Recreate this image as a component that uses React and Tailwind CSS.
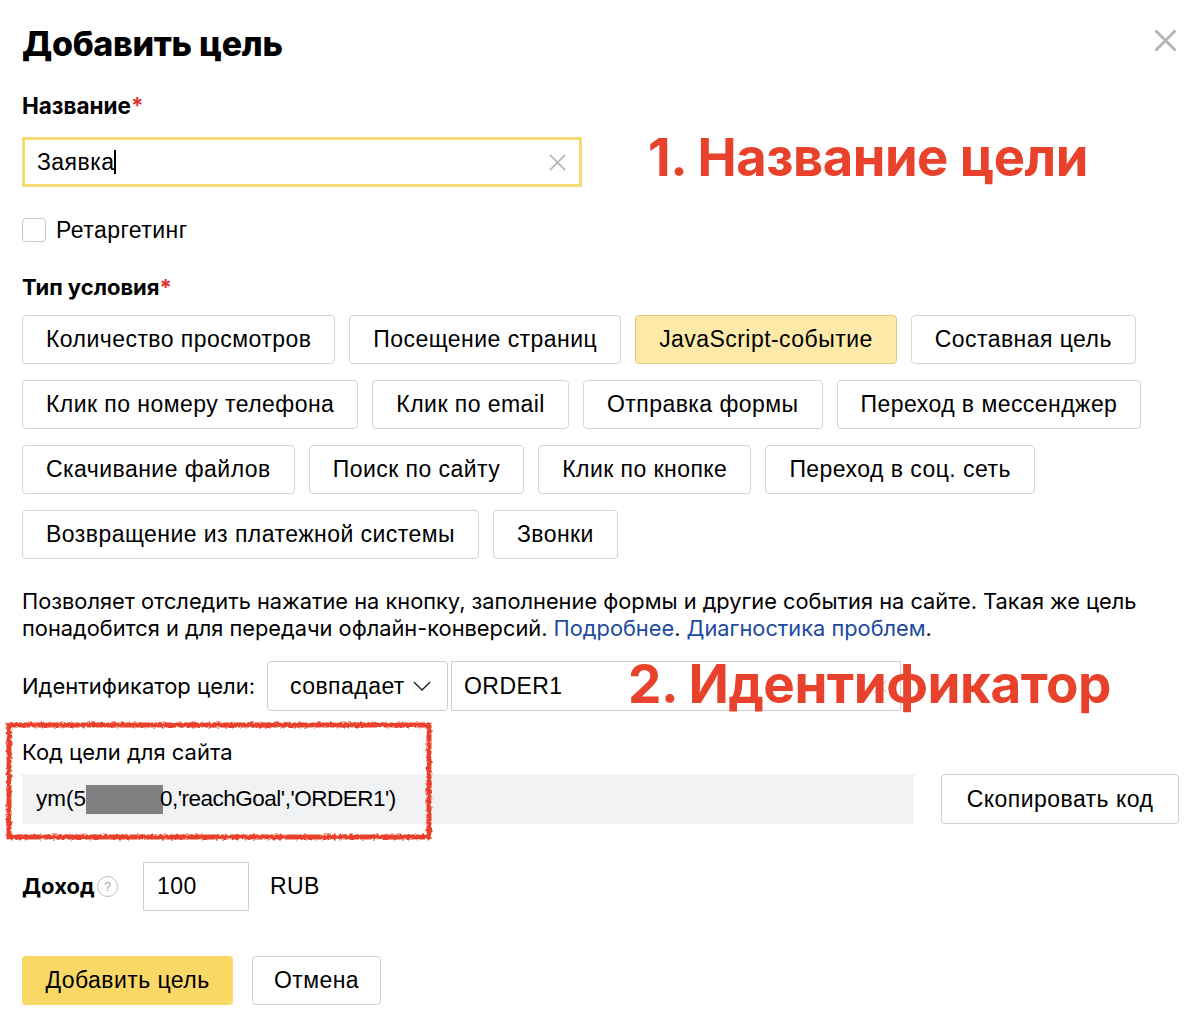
import React from 'react';

const rows = [
  ['Количество просмотров', 'Посещение страниц', 'JavaScript-событие', 'Составная цель'],
  ['Клик по номеру телефона', 'Клик по email', 'Отправка формы', 'Переход в мессенджер'],
  ['Скачивание файлов', 'Поиск по сайту', 'Клик по кнопке', 'Переход в соц. сеть'],
  ['Возвращение из платежной системы', 'Звонки'],
];

const btnFont = { fontFamily: '"Liberation Sans", Arial, sans-serif', letterSpacing: '0.45px' };
const codeFont = { fontFamily: '"Liberation Sans", Arial, sans-serif' };

function Cross({ className, stroke = '#b3b3b3', width = 2 }) {
  return (
    <svg viewBox="0 0 20 20" className={className}>
      <path d="M2 2 L18 18 M18 2 L2 18" stroke={stroke} strokeWidth={width} fill="none" />
    </svg>
  );
}

export default function App() {
  return (
    <div className="relative w-[1200px] h-[1027px] bg-white text-black overflow-hidden pl-[22px] pt-[24px]" style={{ fontFamily: 'Inter, "Noto Sans", sans-serif' }}>
      <h1 className="text-[34px] leading-[40px] font-extrabold tracking-[-0.3px]">Добавить цель</h1>

      <Cross className="absolute left-[1153px] top-[28px] w-[25px] h-[25px]" width={2.2} />

      <div className="mt-[30px] text-[22.5px] leading-[24px] font-bold">
        Название<span className="text-[#d33]">*</span>
      </div>

      <div className="mt-[19px] w-[560px] h-[50px] border-[3px] border-[#f5dc74] flex items-center pl-[12px] pr-[12px]">
        <span className="text-[23px]" style={btnFont}>Заявка</span>
        <span className="w-[2px] h-[24px] bg-black" />
        <Cross className="ml-auto w-[19px] h-[19px]" width={1.6} />
      </div>

      <div className="mt-[31px] flex items-center h-[24px] gap-[10px]">
        <span className="w-[24px] h-[24px] rounded-[4px] border border-[#c8c8c8]" />
        <span className="text-[23px]" style={btnFont}>Ретаргетинг</span>
      </div>

      <div className="mt-[33px] text-[22px] leading-[24px] font-bold">
        Тип условия<span className="text-[#d33]">*</span>
      </div>

      <div className="mt-[16px] flex flex-col gap-[16px]">
        {rows.map((row, i) => (
          <div key={i} className="flex gap-[14px]">
            {row.map((label) => (
              <div
                key={label}
                className={
                  label === 'JavaScript-событие'
                    ? 'h-[49px] px-[23px] flex items-center rounded-[4px] border border-[#dfc97e] bg-[#fdeaa8] text-[23px]'
                    : 'h-[49px] px-[23px] flex items-center rounded-[4px] border border-[#d5d5d5] bg-white text-[23px]'
                }
                style={btnFont}
              >
                {label}
              </div>
            ))}
          </div>
        ))}
      </div>

      <p className="mt-[29px] w-[1150px] text-[21.8px] leading-[27px]">
        Позволяет отследить нажатие на кнопку, заполнение формы и другие события на сайте. Такая же цель понадобится и для передачи офлайн-конверсий.{' '}
        <span className="text-[#1d4aa0]">Подробнее</span>.{' '}
        <span className="text-[#1d4aa0]">Диагностика проблем</span>.
      </p>

      <div className="mt-[19px] flex items-center h-[50px]">
        <span className="w-[245px] text-[22px]">Идентификатор цели:</span>
        <div className="h-[50px] w-[181px] rounded-[4px] border border-[#d0d0d0] flex items-center pl-[22px] gap-[8px]" style={btnFont}>
          <span className="text-[23px]">совпадает</span>
          <svg viewBox="0 0 20 12" className="w-[18px] h-[11px]">
            <path d="M1 1 L10 10 L19 1" stroke="#222" strokeWidth="1.6" fill="none" />
          </svg>
        </div>
        <div className="ml-[3px] h-[50px] w-[450px] border border-[#d0d0d0] flex items-center pl-[12px] pr-[12px]" style={btnFont}>
          <span className="text-[23px]">ORDER1</span>
          <Cross className="ml-auto w-[15px] h-[15px]" width={1.4} />
        </div>
      </div>

      <div className="mt-[29px] text-[22px] leading-[24px]">Код цели для сайта</div>

      <div className="mt-[10px] flex items-center">
        <div className="h-[50px] w-[892px] bg-[#f1f2f4] flex items-center pl-[14px] text-[22.5px]" style={codeFont}>
          <span>ym(5</span>
          <span className="w-[77px] h-[29px] bg-[#808080]" />
          <span className="-ml-[3px] tracking-[-0.5px]">0,'reachGoal','ORDER1')</span>
        </div>
        <div className="ml-[27px] h-[50px] w-[238px] justify-center flex items-center rounded-[4px] border border-[#d0d0d0] text-[23px]" style={btnFont}>
          Скопировать код
        </div>
      </div>

      <div className="mt-[38px] flex items-center h-[49px]">
        <span className="w-[75px] text-[22px] font-bold">Доход</span>
        <span className="w-[21px] h-[21px] rounded-full border border-[#bdbdbd] text-[#aaa] text-[13px] leading-none flex items-center justify-center" style={codeFont}>?</span>
        <div className="ml-[25px] w-[106px] h-[49px] border border-[#cfcfcf] flex items-center pl-[13px] text-[23px]" style={btnFont}>100</div>
        <span className="ml-[21px] text-[23px]" style={btnFont}>RUB</span>
      </div>

      <div className="mt-[45px] flex gap-[19px]">
        <div className="h-[49px] w-[211px] rounded-[4px] bg-[#f9d866] flex items-center justify-center text-[23px]" style={btnFont}>
          Добавить цель
        </div>
        <div className="h-[49px] w-[129px] rounded-[4px] border border-[#d0d0d0] flex items-center justify-center text-[23px]" style={btnFont}>
          Отмена
        </div>
      </div>

      {/* annotations */}
      <div className="absolute left-[648px] top-[127px] text-[#e8412c] text-[52.5px] leading-[60px] font-bold tracking-[-0.5px] whitespace-nowrap">
        1. Название цели
      </div>
      <div className="absolute left-[628px] top-[654px] text-[#e8412c] text-[53px] leading-[60px] font-bold tracking-[-0.5px] whitespace-nowrap">
        2. Идентификатор
      </div>

      <svg className="absolute left-[2px] top-[718px] w-[434px] h-[126px]" viewBox="0 0 434 126">
        <defs>
          <filter id="rough">
            <feTurbulence type="fractalNoise" baseFrequency="0.35" numOctaves="2" result="n" />
            <feDisplacementMap in="SourceGraphic" in2="n" scale="4" />
          </filter>
        </defs>
        <rect x="7" y="7" width="420" height="112" fill="none" stroke="#e8412c" strokeWidth="5" filter="url(#rough)" />
      </svg>
    </div>
  );
}
